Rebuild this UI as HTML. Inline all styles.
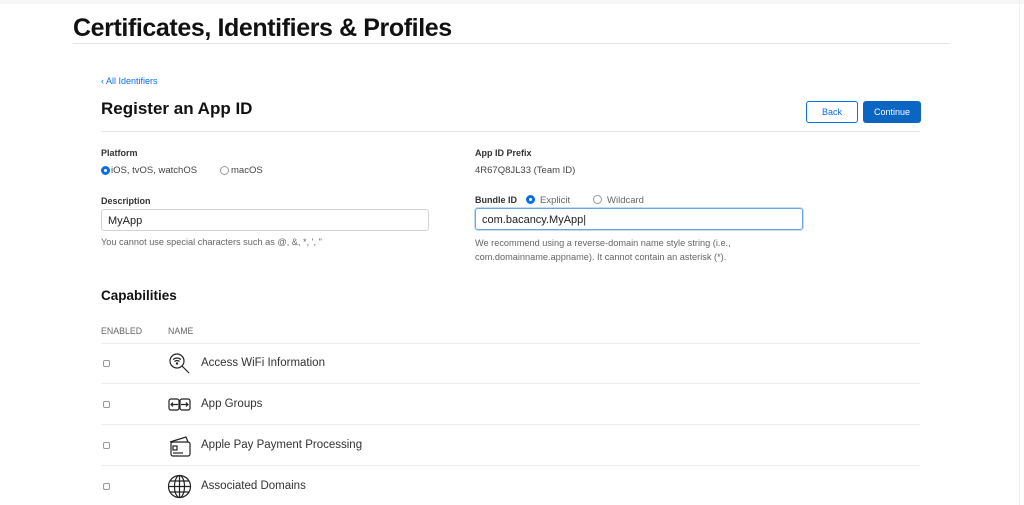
<!DOCTYPE html>
<html><head><meta charset="utf-8"><style>
*{margin:0;padding:0;box-sizing:border-box}
body{width:1024px;height:505px;overflow:hidden;background:#fff;font-family:"Liberation Sans",sans-serif;color:#1d1d1f;position:relative}
.a{position:absolute;white-space:nowrap}
.line{position:absolute;height:1px;background:#e4e4e4}
.lbl{font-size:9px;font-weight:bold;color:#333}
.sm{font-size:9.5px;color:#444}
.help{font-size:9.2px;color:#666}
.radio{position:absolute;width:9px;height:9px;border-radius:50%;border:1px solid #999;background:#fff}
.radio.on{border:3px solid #0a6ee6;background:#fff}
.input{position:absolute;height:22px;border:1px solid #d2d2d7;border-radius:3px;font-size:11px;padding:5px 6px;color:#222}
.cb{position:absolute;left:103px;width:7px;height:7px;border:1px solid #999;border-radius:2px}
.row{font-size:11.5px;color:#333;left:201px}
</style></head><body>
<div class="a" style="left:0;top:0;width:1024px;height:4px;background:#f6f6f6"></div>
<div class="a" style="left:1019px;top:0;width:1px;height:505px;background:#eee"></div>
<div class="a" style="left:73px;top:14px;font-size:25px;font-weight:bold;letter-spacing:-0.4px;color:#111">Certificates, Identifiers &amp; Profiles</div>
<div class="line" style="left:73px;top:43px;width:877px"></div>
<div class="a" style="left:101px;top:76px;font-size:9px;color:#0a6ee6">‹ All Identifiers</div>
<div class="a" style="left:101px;top:99px;font-size:17px;font-weight:bold;color:#111">Register an App ID</div>
<div class="a" style="left:806px;top:101px;width:52px;height:22px;border:1px solid #0a6ee6;border-radius:3px;font-size:9px;color:#0a6ee6;text-align:center;line-height:20px">Back</div>
<div class="a" style="left:863px;top:101px;width:58px;height:22px;background:#0a66c2;border-radius:3px;font-size:9px;color:#fff;text-align:center;line-height:22px">Continue</div>
<div class="line" style="left:101px;top:131px;width:819px"></div>
<div class="a lbl" style="left:101px;top:148px">Platform</div>
<div class="radio on" style="left:101px;top:166px"></div>
<div class="a sm" style="left:111px;top:165px">iOS, tvOS, watchOS</div>
<div class="radio" style="left:220px;top:166px"></div>
<div class="a sm" style="left:231px;top:165px">macOS</div>
<div class="a lbl" style="left:101px;top:196px">Description</div>
<div class="input" style="left:101px;top:209px;width:328px">MyApp</div>
<div class="a help" style="left:101px;top:237px">You cannot use special characters such as @, &amp;, *, ', "</div>
<div class="a lbl" style="left:475px;top:148px">App ID Prefix</div>
<div class="a sm" style="left:475px;top:165px">4R67Q8JL33 (Team ID)</div>
<div class="a lbl" style="left:475px;top:195px">Bundle ID</div>
<div class="radio on" style="left:526px;top:195px"></div>
<div class="a sm" style="left:540px;top:195px;color:#666">Explicit</div>
<div class="radio" style="left:593px;top:195px"></div>
<div class="a sm" style="left:607px;top:195px;color:#666">Wildcard</div>
<div class="input" style="left:475px;top:208px;width:328px;border:1px solid #6aa5e8;box-shadow:0 0 0 1px #c5dcf7">com.bacancy.MyApp|</div>
<div class="a help" style="left:475px;top:236px;line-height:14px">We recommend using a reverse-domain name style string (i.e.,<br>com.domainname.appname). It cannot contain an asterisk (*).</div>
<div class="a" style="left:101px;top:288px;font-size:13.5px;font-weight:bold;color:#111">Capabilities</div>
<div class="a" style="left:101px;top:326px;font-size:8.8px;color:#666">ENABLED</div>
<div class="a" style="left:168px;top:326px;font-size:8.8px;color:#666">NAME</div>
<div class="line" style="left:101px;top:343px;width:819px;background:#eee"></div>
<div class="line" style="left:101px;top:383px;width:819px;background:#eee"></div>
<div class="line" style="left:101px;top:424px;width:819px;background:#eee"></div>
<div class="line" style="left:101px;top:465px;width:819px;background:#eee"></div>
<div class="cb" style="top:360px"></div><div class="cb" style="top:401px"></div><div class="cb" style="top:442px"></div><div class="cb" style="top:483px"></div>
<svg class="a" style="left:167px;top:352px" width="24" height="24" viewBox="0 0 24 24" fill="none" stroke="#222" stroke-width="1.2"><circle cx="10" cy="9" r="7"/><path d="M15 14l7 7"/><path d="M6 7.5q4-3 8 0M7.5 9.5q2.5-2 5 0"/><circle cx="10" cy="11.5" r=".6" fill="#222"/></svg>
<div class="a row" style="top:357px">Access WiFi Information</div>
<svg class="a" style="left:168px;top:397px" width="24" height="16" viewBox="0 0 24 16" fill="none" stroke="#222" stroke-width="1.2"><rect x="1" y="2" width="10" height="11" rx="2"/><rect x="12" y="2" width="10" height="11" rx="2"/><path d="M3 7.5h7M5 5.5l-2 2 2 2M13 7.5h7M18 5.5l2 2-2 2"/></svg>
<div class="a row" style="top:398px">App Groups</div>
<svg class="a" style="left:168px;top:433px" width="24" height="26" viewBox="0 0 24 26" fill="none" stroke="#222" stroke-width="1.2"><path d="M2 9l16-5 2 5"/><rect x="3" y="9" width="19" height="14" rx="2"/><rect x="5" y="13" width="4" height="4"/><path d="M5 20h10"/></svg>
<div class="a row" style="top:439px">Apple Pay Payment Processing</div>
<svg class="a" style="left:167px;top:474px" width="25" height="25" viewBox="0 0 25 25" fill="none" stroke="#222" stroke-width="1.2"><circle cx="12.5" cy="12.5" r="11"/><ellipse cx="12.5" cy="12.5" rx="5" ry="11"/><path d="M12.5 1.5v22M1.5 12.5h22M3 7h19M3 18h19"/></svg>
<div class="a row" style="top:480px">Associated Domains</div>
</body></html>
